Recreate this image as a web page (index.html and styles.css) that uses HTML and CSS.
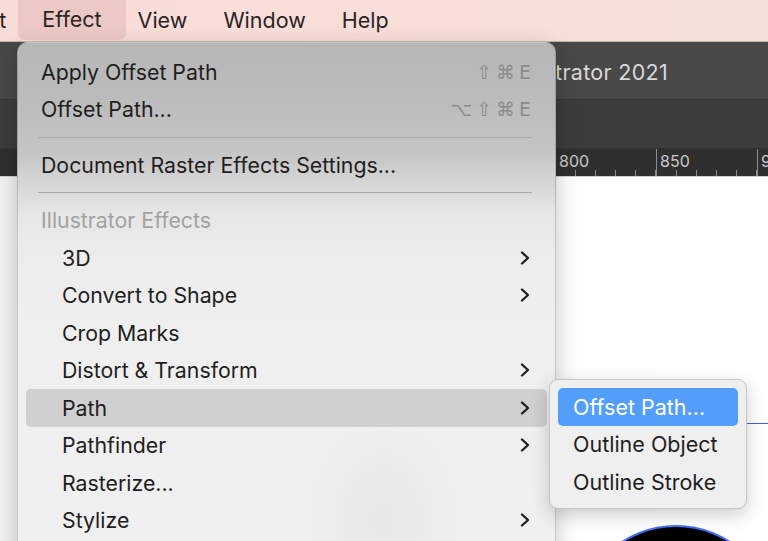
FILE: index.html
```html
<!DOCTYPE html>
<html>
<head>
<meta charset="utf-8">
<link rel="stylesheet" href="styles.css">
</head>
<body>
<div class="screen">
  <nav class="menubar">
    <span class="mb-item mb-first">Edit</span>
    <span class="mb-item mb-active">Effect</span>
    <span class="mb-item">View</span>
    <span class="mb-item">Window</span>
    <span class="mb-item">Help</span>
  </nav>
  <div class="app">
    <div class="titlebar"><div class="title-clip"><span class="title">Adobe Illustrator 2021</span></div></div>
    <div class="toolbar"></div>
    <div class="ruler">
      <div class="seg"><span>800</span></div>
      <div class="seg"><span>850</span></div>
      <div class="seg"><span>900</span></div>
    </div>
    <div class="canvas">
      <div class="pathline"></div>
      <div class="circle"></div>
    </div>
  </div>

  <div class="menu">
    <div class="mi"><span class="label">Apply Offset Path</span><span class="sc">⇧⌘E</span></div>
    <div class="mi"><span class="label">Offset Path...</span><span class="sc">⌥⇧⌘E</span></div>
    <div class="sep"></div>
    <div class="mi"><span class="label">Document Raster Effects Settings...</span></div>
    <div class="sep"></div>
    <div class="mi heading"><span class="label">Illustrator Effects</span></div>
    <div class="mi sub"><span class="label">3D</span><svg class="chev" viewBox="0 0 10 14"><polyline points="2,1.5 8,7 2,12.5"/></svg></div>
    <div class="mi sub"><span class="label">Convert to Shape</span><svg class="chev" viewBox="0 0 10 14"><polyline points="2,1.5 8,7 2,12.5"/></svg></div>
    <div class="mi sub"><span class="label">Crop Marks</span></div>
    <div class="mi sub"><span class="label">Distort &amp; Transform</span><svg class="chev" viewBox="0 0 10 14"><polyline points="2,1.5 8,7 2,12.5"/></svg></div>
    <div class="mi sub hover"><span class="label">Path</span><svg class="chev" viewBox="0 0 10 14"><polyline points="2,1.5 8,7 2,12.5"/></svg></div>
    <div class="mi sub"><span class="label">Pathfinder</span><svg class="chev" viewBox="0 0 10 14"><polyline points="2,1.5 8,7 2,12.5"/></svg></div>
    <div class="mi sub"><span class="label">Rasterize...</span></div>
    <div class="mi sub"><span class="label">Stylize</span><svg class="chev" viewBox="0 0 10 14"><polyline points="2,1.5 8,7 2,12.5"/></svg></div>
  </div>

  <div class="submenu">
    <div class="mi selected"><span class="label">Offset Path...</span></div>
    <div class="mi"><span class="label">Outline Object</span></div>
    <div class="mi"><span class="label">Outline Stroke</span></div>
  </div>
</div>
</body>
</html>
```

FILE: styles.css
```css
* { box-sizing: border-box; }
html, body { margin: 0; padding: 0; }
body {
  width: 768px;
  height: 541px;
  overflow: hidden;
  font-family: Inter, "Noto Sans", "Liberation Sans", sans-serif;
  background: #fafafa;
}
.screen {
  position: relative;
  width: 768px;
  height: 541px;
  overflow: hidden;
}

/* menu bar */
.menubar {
  height: 42px;
  display: flex;
  align-items: stretch;
  background: linear-gradient(to right, #f9dcd8, #f8dfda 60%, #f5e0dc);
  border-bottom: 1px solid #c9b7b4;
  font-size: 21.5px;
  color: #2a2424;
  white-space: nowrap;
}
.mb-item {
  display: flex;
  align-items: center;
  padding: 0 18px;
  padding-bottom: 2px;
}
.mb-first { margin-left: -50px; }
.mb-active {
  padding: 0 24px 2px;
  margin: 0 -6px;
  background: #ecc9c6;
  border-radius: 0 0 7px 7px;
  height: 40px;
}

/* app chrome */
.titlebar {
  height: 58px;
  background: #484848;
  border-bottom: 1px solid #343434;
  display: flex;
  align-items: center;
  justify-content: flex-end;
  padding-left: 557px;
  padding-right: 100px;
  padding-top: 2px;
}
.title-clip {
  flex: 1;
  min-width: 0;
  overflow: hidden;
  display: flex;
  justify-content: flex-end;
  white-space: nowrap;
}
.title {
  flex: none;
  font-size: 21.5px;
  color: #d9d9d9;
  letter-spacing: 0.3px;
}
.toolbar {
  height: 49px;
  background: #3c3c3c;
  border-bottom: 1px solid #333;
}
.ruler {
  height: 28px;
  background: #2f2f2f;
  display: flex;
  padding-left: 555px;
  border-bottom: 1px solid #cfcfcf;
}
.seg {
  flex: 0 0 101px;
  border-left: 1px solid #8c8c8c;
  padding-left: 3px;
  font-size: 16px;
  line-height: 24px;
  color: #c9c9c9;
  background-image: repeating-linear-gradient(to right, transparent 0 19px, #8a8a8a 19px 20px);
  background-size: 100% 6px;
  background-repeat: no-repeat;
  background-position: left bottom;
}
.canvas {
  position: relative;
  height: 400px;
  background: linear-gradient(to right, #f2f2f2 0 17px, #fbfbfb 17px, #ffffff);
}
.pathline {
  position: absolute;
  left: 700px;
  top: 246px;
  width: 80px;
  height: 1px;
  background: #3d63ee;
}
.circle {
  position: absolute;
  left: 576px;
  top: 348px;
  width: 200px;
  height: 200px;
  border-radius: 50%;
  background: #000;
  border: 2px solid #3f6cf2;
}

/* menu */
.menu {
  position: absolute;
  left: 17px;
  top: 42px;
  width: 539px;
  height: 540px;
  padding-top: 10px;
  border-radius: 10px 10px 0 0;
  border: 1px solid rgba(0,0,0,0.16);
  box-shadow: 0 6px 22px rgba(0,0,0,0.22);
  background:
    radial-gradient(ellipse 80px 110px at 365px 480px, rgba(0,0,0,0.04), rgba(0,0,0,0)),
    linear-gradient(to bottom, #b7b7b7 0px, #bcbcbc 60px, #c5c5c5 110px, #d6d6d6 140px, #e6e6e6 170px, #ececec 210px, #efefef 280px, #f0f0f0);
  font-size: 21.3px;
  color: #1e1e1e;
}
.mi {
  height: 37.5px;
  display: flex;
  align-items: center;
  justify-content: space-between;
  margin: 0 8px;
  padding: 0 17px 0 15px;
  border-radius: 5px;
  white-space: nowrap;
}
.mi.sub { padding-left: 36px; }
.mi.heading { color: #a2a2a2; }
.mi.hover { background: #d0d0d0; }
.sc {
  color: #8b8b8b;
  font-family: "DejaVu Sans", sans-serif;
  font-size: 19px;
  letter-spacing: 4px;
  margin-right: -5px;
}
.sep {
  height: 1px;
  margin: 8.5px 23px 8.5px 20px;
  background: #a9a9a9;
}
.chev {
  width: 10px;
  height: 14px;
}
.chev polyline {
  fill: none;
  stroke: #1e1e1e;
  stroke-width: 2.3;
  stroke-linecap: round;
  stroke-linejoin: round;
}

/* submenu */
.submenu {
  position: absolute;
  left: 549px;
  top: 379px;
  width: 198px;
  height: 130px;
  padding-top: 8px;
  border-radius: 9px;
  background: #efefef;
  border: 1px solid #c6c6c6;
  box-shadow: 0 6px 18px rgba(0,0,0,0.2);
  font-size: 21.5px;
  color: #1e1e1e;
}
.submenu .mi {
  padding-left: 15px;
}
.submenu .mi.selected {
  background: #539ef8;
  color: #fff;
}
```
